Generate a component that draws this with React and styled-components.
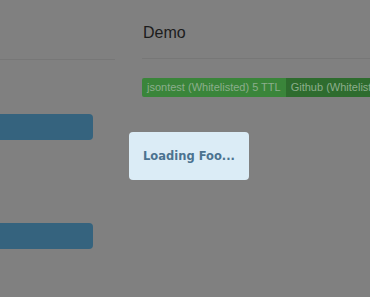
import React from 'react';
import styled, { createGlobalStyle } from 'styled-components';

const GlobalStyle = createGlobalStyle`
  html, body {
    margin: 0;
    padding: 0;
    background: #808080;
    font-family: "Liberation Sans", Arial, sans-serif;
  }
`;

const Page = styled.div`
  display: flex;
  width: 370px;
  height: 297px;
  overflow: hidden;
  background: #808080;
`;

const Sidebar = styled.div`
  width: 115px;
  flex-shrink: 0;
  display: flex;
  flex-direction: column;
`;

const SideHeader = styled.div`
  height: 59px;
  border-bottom: 1px solid #777;
`;

const SideButton = styled.div`
  width: 100px;
  height: 26px;
  margin-left: -7px;
  margin-top: ${(p) => p.top}px;
  background: #35637e;
  border-radius: 4px;
`;

const Main = styled.div`
  flex: 1;
  margin-left: 27px;
  display: flex;
  flex-direction: column;
  min-width: 0;
`;

const Header = styled.div`
  height: 59px;
  border-bottom: 1px solid #777;
  display: flex;
  align-items: center;
  padding-left: 1px;
  padding-top: 7px;
  box-sizing: border-box;
`;

const Title = styled.h1`
  margin: 0;
  font-size: 16px;
  font-weight: 400;
  color: #1c1c1c;
`;

const BadgeRow = styled.div`
  display: flex;
  margin-top: 19px;
  white-space: nowrap;
`;

const Badge = styled.span`
  flex-shrink: 0;
  height: 19px;
  line-height: 19px;
  padding: 0 5px;
  font-size: 11px;
  color: #8cae8c;
  background: ${(p) => (p.dark ? '#2e6c2e' : '#3a853a')};
  border-radius: ${(p) => (p.first ? '2px 0 0 2px' : '0')};
`;

const Modal = styled.div`
  position: fixed;
  left: 129px;
  top: 132px;
  width: 120px;
  height: 48px;
  background: #dbecf6;
  border-radius: 4px;
  display: flex;
  align-items: center;
  justify-content: center;
  font-family: "DejaVu Sans", Verdana, sans-serif;
  font-weight: 700;
  font-size: 11.5px;
  color: #4b7390;
`;

export default function App() {
  return (
    <>
      <GlobalStyle />
      <Page>
        <Sidebar>
          <SideHeader />
          <SideButton top={54} />
          <SideButton top={83} />
        </Sidebar>
        <Main>
          <Header>
            <Title>Demo</Title>
          </Header>
          <BadgeRow>
            <Badge first>jsontest (Whitelisted) 5 TTL</Badge>
            <Badge dark>Github (Whitelisted)</Badge>
          </BadgeRow>
        </Main>
      </Page>
      <Modal>Loading Foo...</Modal>
    </>
  );
}
